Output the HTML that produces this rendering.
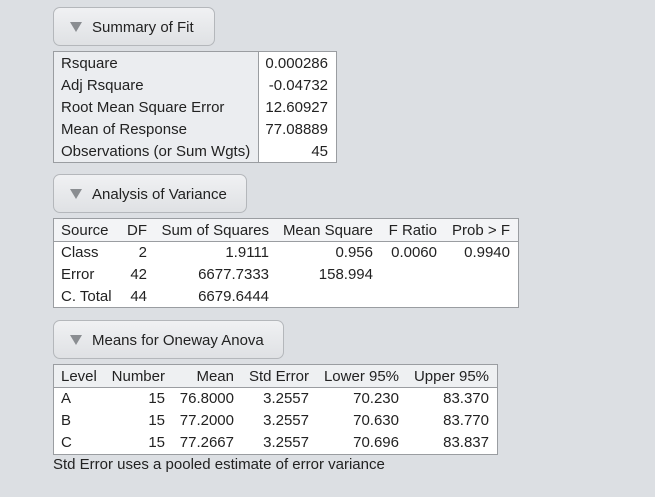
<!DOCTYPE html><html><head><style>
body{margin:0;width:655px;height:497px;background:#dcdfe3;font-family:"Liberation Sans",sans-serif;font-size:15px;color:#222;position:relative;overflow:hidden}
.b{position:absolute;left:53px;height:39px;border:1px solid #b4b7bb;border-radius:7px;background:linear-gradient(#f0f1f3,#dfe1e4);box-sizing:border-box}
.b span{position:absolute;left:38px;top:11px;font-size:15px}
.b i{position:absolute;left:16px;top:14px;width:0;height:0;border-left:6px solid transparent;border-right:6px solid transparent;border-top:10px solid #8a8d91}
.t{position:absolute;border:1px solid #9a9da1;box-sizing:border-box;background:#fff}
.c{position:absolute;line-height:22px;white-space:nowrap;margin-top:1px}
.r{text-align:right}
</style></head><body>
<div class="b" style="top:7px;width:162px"><i></i><span>Summary of Fit</span></div>
<div class="t" style="left:53px;top:51px;width:284px;height:112px">
<div style="position:absolute;left:0;top:0;width:204px;height:110px;background:#ebedf0;border-right:1px solid #9a9da1"></div></div>
<div class="c" style="left:61px;top:52px">Rsquare</div><div class="c r" style="right:327px;top:52px">0.000286</div>
<div class="c" style="left:61px;top:74px">Adj Rsquare</div><div class="c r" style="right:327px;top:74px">-0.04732</div>
<div class="c" style="left:61px;top:96px">Root Mean Square Error</div><div class="c r" style="right:327px;top:96px">12.60927</div>
<div class="c" style="left:61px;top:118px">Mean of Response</div><div class="c r" style="right:327px;top:118px">77.08889</div>
<div class="c" style="left:61px;top:140px">Observations (or Sum Wgts)</div><div class="c r" style="right:327px;top:140px">45</div>

<div class="b" style="top:174px;width:194px"><i></i><span>Analysis of Variance</span></div>
<div class="t" style="left:53px;top:218px;width:466px;height:90px"><div style="position:absolute;left:0;right:0;top:0;height:22px;border-bottom:1px solid #9a9da1;background:#f3f4f6"></div></div>
<div class="c" style="left:61px;top:219px">Source</div><div class="c r" style="right:508px;top:219px">DF</div><div class="c r" style="right:386px;top:219px">Sum of Squares</div><div class="c r" style="right:282px;top:219px">Mean Square</div><div class="c r" style="right:218px;top:219px">F Ratio</div><div class="c r" style="right:145px;top:219px">Prob &gt; F</div>
<div class="c" style="left:61px;top:241px">Class</div><div class="c r" style="right:508px;top:241px">2</div><div class="c r" style="right:386px;top:241px">1.9111</div><div class="c r" style="right:282px;top:241px">0.956</div><div class="c r" style="right:218px;top:241px">0.0060</div><div class="c r" style="right:145px;top:241px">0.9940</div>
<div class="c" style="left:61px;top:263px">Error</div><div class="c r" style="right:508px;top:263px">42</div><div class="c r" style="right:386px;top:263px">6677.7333</div><div class="c r" style="right:282px;top:263px">158.994</div>
<div class="c" style="left:61px;top:285px">C. Total</div><div class="c r" style="right:508px;top:285px">44</div><div class="c r" style="right:386px;top:285px">6679.6444</div>

<div class="b" style="top:320px;width:231px"><i></i><span>Means for Oneway Anova</span></div>
<div class="t" style="left:53px;top:364px;width:445px;height:91px"><div style="position:absolute;left:0;right:0;top:0;height:22px;border-bottom:1px solid #9a9da1;background:#eef0f2"></div></div>
<div class="c" style="left:61px;top:365px">Level</div><div class="c r" style="right:490px;top:365px">Number</div><div class="c r" style="right:421px;top:365px">Mean</div><div class="c r" style="right:346px;top:365px">Std Error</div><div class="c r" style="right:256px;top:365px">Lower 95%</div><div class="c r" style="right:166px;top:365px">Upper 95%</div>
<div class="c" style="left:61px;top:387px">A</div><div class="c r" style="right:490px;top:387px">15</div><div class="c r" style="right:421px;top:387px">76.8000</div><div class="c r" style="right:346px;top:387px">3.2557</div><div class="c r" style="right:256px;top:387px">70.230</div><div class="c r" style="right:166px;top:387px">83.370</div>
<div class="c" style="left:61px;top:409px">B</div><div class="c r" style="right:490px;top:409px">15</div><div class="c r" style="right:421px;top:409px">77.2000</div><div class="c r" style="right:346px;top:409px">3.2557</div><div class="c r" style="right:256px;top:409px">70.630</div><div class="c r" style="right:166px;top:409px">83.770</div>
<div class="c" style="left:61px;top:431px">C</div><div class="c r" style="right:490px;top:431px">15</div><div class="c r" style="right:421px;top:431px">77.2667</div><div class="c r" style="right:346px;top:431px">3.2557</div><div class="c r" style="right:256px;top:431px">70.696</div><div class="c r" style="right:166px;top:431px">83.837</div>
<div class="c" style="left:53px;top:453px">Std Error uses a pooled estimate of error variance</div>
</body></html>
